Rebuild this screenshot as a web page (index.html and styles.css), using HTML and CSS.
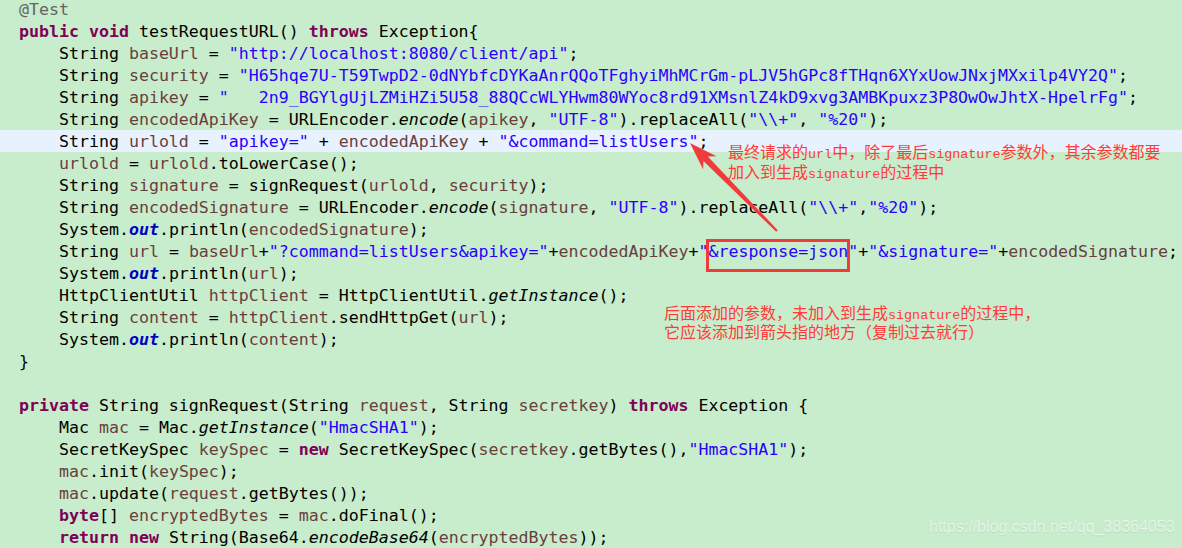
FILE: index.html
```html
<!DOCTYPE html>
<html>
  <head>
    <link rel="stylesheet" href="styles.css">
  </head>
  <body>
    <div class="editor">
      <pre class="code">
<div class="line"><span class="a">@Test</span></div>
<div class="line"><span class="k">public</span> <span class="k">void</span> testRequestURL() <span class="k">throws</span> Exception{</div>
<div class="line">    String <span class="v">baseUrl</span> = <span class="s">"http://localhost:8080/client/api"</span>;</div>
<div class="line">    String <span class="v">security</span> = <span class="s">"H65hqe7U-T59TwpD2-0dNYbfcDYKaAnrQQoTFghyiMhMCrGm-pLJV5hGPc8fTHqn6XYxUowJNxjMXxilp4VY2Q"</span>;</div>
<div class="line">    String <span class="v">apikey</span> = <span class="s">"   2n9_BGYlgUjLZMiHZi5U58_88QCcWLYHwm80WYoc8rd91XMsnlZ4kD9xvg3AMBKpuxz3P8OwOwJhtX-HpelrFg"</span>;</div>
<div class="line">    String <span class="v">encodedApiKey</span> = URLEncoder.<span class="i">encode</span>(<span class="v">apikey</span>, <span class="s">"UTF-8"</span>).replaceAll(<span class="s">"\\+"</span>, <span class="s">"%20"</span>);</div>
<div class="line current">    String <span class="v">urlold</span> = <span class="s">"apikey="</span> + <span class="v">encodedApiKey</span> + <span class="s">"&amp;command=listUsers"</span>;</div>
<div class="line">    <span class="v">urlold</span> = <span class="v">urlold</span>.toLowerCase();</div>
<div class="line">    String <span class="v">signature</span> = signRequest(<span class="v">urlold</span>, <span class="v">security</span>);</div>
<div class="line">    String <span class="v">encodedSignature</span> = URLEncoder.<span class="i">encode</span>(<span class="v">signature</span>, <span class="s">"UTF-8"</span>).replaceAll(<span class="s">"\\+"</span>,<span class="s">"%20"</span>);</div>
<div class="line">    System.<span class="f">out</span>.println(<span class="v">encodedSignature</span>);</div>
<div class="line">    String <span class="v">url</span> = <span class="v">baseUrl</span>+<span class="s">"?command=listUsers&amp;apikey="</span>+<span class="v">encodedApiKey</span>+<span class="s">"<span class="boxed">&amp;response=json</span>"</span>+<span class="s">"&amp;signature="</span>+<span class="v">encodedSignature</span>;</div>
<div class="line">    System.<span class="f">out</span>.println(<span class="v">url</span>);</div>
<div class="line">    HttpClientUtil <span class="v">httpClient</span> = HttpClientUtil.<span class="i">getInstance</span>();</div>
<div class="line">    String <span class="v">content</span> = <span class="v">httpClient</span>.sendHttpGet(<span class="v">url</span>);</div>
<div class="line">    System.<span class="f">out</span>.println(<span class="v">content</span>);</div>
<div class="line">}</div>
<div class="line"> </div>
<div class="line"><span class="k">private</span> String signRequest(String <span class="v">request</span>, String <span class="v">secretkey</span>) <span class="k">throws</span> Exception {</div>
<div class="line">    Mac <span class="v">mac</span> = Mac.<span class="i">getInstance</span>(<span class="s">"HmacSHA1"</span>);</div>
<div class="line">    SecretKeySpec <span class="v">keySpec</span> = <span class="k">new</span> SecretKeySpec(<span class="v">secretkey</span>.getBytes(),<span class="s">"HmacSHA1"</span>);</div>
<div class="line">    <span class="v">mac</span>.init(<span class="v">keySpec</span>);</div>
<div class="line">    <span class="v">mac</span>.update(<span class="v">request</span>.getBytes());</div>
<div class="line">    <span class="k">byte</span>[] <span class="v">encryptedBytes</span> = <span class="v">mac</span>.doFinal();</div>
<div class="line">    <span class="k">return</span> <span class="k">new</span> String(Base64.<span class="i">encodeBase64</span>(<span class="v">encryptedBytes</span>));</div>
</pre>

      <!-- annotations drawn over the code -->
      <div class="note note-top">
        最终请求的<span class="en">url</span>中，除了最后<span class="en">signature</span>参数外，其余参数都要<br>
        加入到生成<span class="en">signature</span>的过程中
      </div>
      <div class="note note-bottom">
        后面添加的参数，未加入到生成<span class="en">signature</span>的过程中，<br>
        它应该添加到箭头指的地方（复制过去就行）
      </div>

      <svg class="arrow" width="1182" height="548" viewBox="0 0 1182 548">
        <polygon points="690,143 716.5,156.2 707.8,156.6 777.8,230.2 776.2,231.8 703.4,160.9 703.2,169.6" fill="#f03b3b" />
      </svg>

      <div class="watermark">https://blog.csdn.net/qq_38364053</div>
    </div>
  </body>
</html>
```

FILE: styles.css
```css
html,
body {
  margin: 0;
  padding: 0;
  background-color: #c7edcc;
  overflow: hidden;
}

.editor {
  position: relative;
  width: 1182px;
  height: 548px;
  overflow: hidden;
  background-color: #c7edcc;
}

.code {
  margin: -2px 0 0 0;
  font-family: "DejaVu Sans Mono", "Liberation Mono", monospace;
  font-size: 16.6px;
  color: #000;
  white-space: pre;
  display: flex;
  flex-direction: column;
}

.line {
  height: 22px;
  line-height: 23px;
  padding-left: 19px;
}

.line.current {
  background-color: #e8f2fe;
}

/* eclipse colours */
.k {
  color: #7f0055;
  font-weight: bold;
}

.s {
  color: #2a00ff;
}

.v {
  color: #6a3e3e;
}

.f {
  color: #0000c0;
  font-weight: bold;
  font-style: italic;
}

.i {
  font-style: italic;
}

.a {
  color: #646464;
}

.boxed {
  position: relative;
}

.boxed::after {
  content: "";
  position: absolute;
  left: -2px;
  right: -2px;
  top: -3px;
  bottom: -11px;
  border: 3px solid #ee3b3b;
}

.note {
  position: absolute;
  color: #ff3a3a;
  font-family: "Noto Sans CJK SC", sans-serif;
  font-size: 16px;
  line-height: 20px;
  white-space: nowrap;
}

.note .en {
  font-family: "Liberation Mono", monospace;
  font-size: 13.4px;
  line-height: 1;
}

.note-top {
  left: 728px;
  top: 141px;
}

.note-bottom {
  left: 664px;
  top: 303px;
  line-height: 19px;
}

.arrow {
  position: absolute;
  left: 0;
  top: 0;
}

.watermark {
  position: absolute;
  left: 929px;
  top: 518px;
  font-family: "Liberation Sans", Arial, sans-serif;
  font-size: 16px;
  color: rgba(255, 255, 255, 0.6);
  text-shadow: 0 1px 1px rgba(0, 0, 0, 0.08);
}
```
